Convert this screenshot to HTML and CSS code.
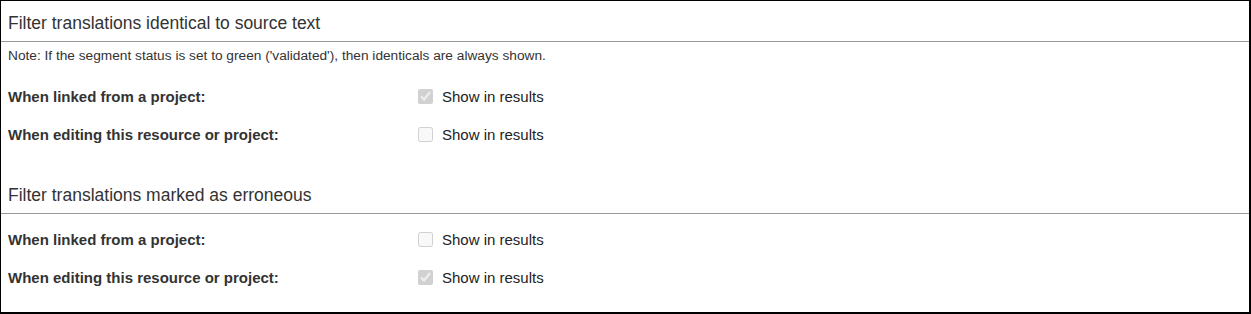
FILE: index.html
```html
<!DOCTYPE html>
<html>
<head>
<meta charset="utf-8">
<link rel="stylesheet" href="styles.css">
</head>
<body>
<div class="panel">
  <section class="group">
    <h2 class="group-title">Filter translations identical to source text</h2>
    <p class="note">Note: If the segment status is set to green ('validated'), then identicals are always shown.</p>
    <div class="rows">
      <div class="row">
        <span class="label">When linked from a project:</span>
        <label class="option"><input type="checkbox" checked disabled><span>Show in results</span></label>
      </div>
      <div class="row">
        <span class="label">When editing this resource or project:</span>
        <label class="option"><input type="checkbox" disabled><span>Show in results</span></label>
      </div>
    </div>
  </section>
  <section class="group second">
    <h2 class="group-title">Filter translations marked as erroneous</h2>
    <div class="rows tight">
      <div class="row">
        <span class="label">When linked from a project:</span>
        <label class="option"><input type="checkbox" disabled><span>Show in results</span></label>
      </div>
      <div class="row">
        <span class="label">When editing this resource or project:</span>
        <label class="option"><input type="checkbox" checked disabled><span>Show in results</span></label>
      </div>
    </div>
  </section>
</div>
</body>
</html>
```

FILE: styles.css
```css
html, body {
  margin: 0;
  padding: 0;
  background: #fff;
}
body {
  font-family: "Liberation Sans", Arial, sans-serif;
  color: #333;
}
.panel {
  box-sizing: border-box;
  width: 1251px;
  height: 314px;
  border: 1px solid #000;
  border-right-width: 2px;
  border-bottom-width: 2px;
}
.group-title {
  margin: 0;
  font-size: 17.5px;
  font-weight: normal;
  line-height: 20px;
  color: #333;
  padding: 12px 7px 8px;
  border-bottom: 1px solid #999;
}
.note {
  margin: 7px 0 0;
  padding: 0 7px;
  font-size: 13.7px;
  line-height: 14px;
  color: #333;
}
.rows {
  margin-top: 14px;
}
.rows.tight {
  margin-top: 6px;
}
.row {
  display: grid;
  grid-template-columns: 410px auto;
  align-items: center;
  height: 38px;
  padding-left: 7px;
}
.label {
  font-size: 15px;
  font-weight: bold;
  color: #333;
}
.option {
  display: flex;
  align-items: center;
  gap: 9px;
  font-size: 15px;
  color: #222;
}
.option input {
  width: 15px;
  height: 15px;
  margin: 0;
}
.second {
  margin-top: 20px;
}
```
